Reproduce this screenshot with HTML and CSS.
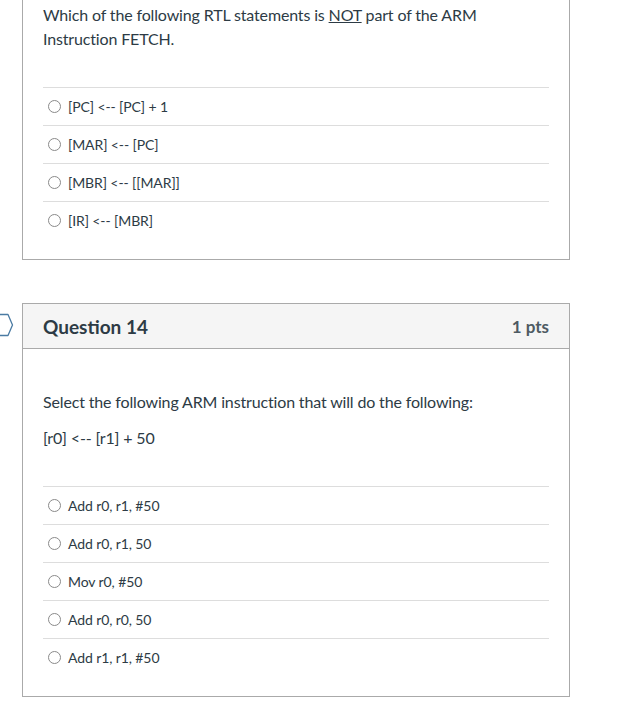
FILE: index.html
```html
<!DOCTYPE html>
<html>
<head>
<meta charset="utf-8">
<link rel="stylesheet" href="styles.css">
</head>
<body>
<div class="page">
  <div class="card card-cut">
    <div class="qbody qbody-top">
      <div class="qtext">
        <p>Which of the following RTL statements is <u>NOT</u> part of the ARM Instruction FETCH.</p>
      </div>
      <div class="answers">
        <label class="answer"><span class="radio"></span><span>[PC] &lt;-- [PC] + 1</span></label>
        <label class="answer"><span class="radio"></span><span>[MAR] &lt;-- [PC]</span></label>
        <label class="answer"><span class="radio"></span><span>[MBR] &lt;-- [[MAR]]</span></label>
        <label class="answer"><span class="radio"></span><span>[IR] &lt;-- [MBR]</span></label>
      </div>
    </div>
  </div>

  <div class="card card-full">
    <svg class="flag" width="16" height="24" viewBox="0 0 16 24"><path d="M0 1.5 H10 L14.5 12 L10 22.5 H0" fill="none" stroke="#4a7ba3" stroke-width="1.3" stroke-linejoin="round"/></svg>
    <div class="qheader">
      <span class="qtitle">Question 14</span>
      <span class="qpts">1 pts</span>
    </div>
    <div class="qbody qbody-main">
      <div class="qtext">
        <p>Select the following ARM instruction that will do the following:</p>
        <p>[r0] &lt;-- [r1] + 50</p>
      </div>
      <div class="answers">
        <label class="answer"><span class="radio"></span><span>Add r0, r1, #50</span></label>
        <label class="answer"><span class="radio"></span><span>Add r0, r1, 50</span></label>
        <label class="answer"><span class="radio"></span><span>Mov r0, #50</span></label>
        <label class="answer"><span class="radio"></span><span>Add r0, r0, 50</span></label>
        <label class="answer"><span class="radio"></span><span>Add r1, r1, #50</span></label>
      </div>
    </div>
  </div>
</div>
</body>
</html>
```

FILE: styles.css
```css
html, body {
  margin: 0;
  padding: 0;
  background: #ffffff;
}
body {
  font-family: Lato, "Open Sans", "Liberation Sans", sans-serif;
  color: #2d3b45;
}
.page {
  padding-left: 22px;
  width: 548px;
}
.card {
  position: relative;
  border: 1px solid #aaaaaa;
  background: #fff;
}
.card-cut {
  border-top: none;
}
.card-full {
  margin-top: 43px;
}
.qheader {
  height: 44px;
  background: #f5f5f5;
  border-bottom: 1px solid #aaaaaa;
  display: flex;
  align-items: center;
  justify-content: space-between;
  padding: 0 20px;
}
.qtitle {
  font-size: 19px;
  font-weight: 700;
  color: #2d3b45;
}
.qpts {
  font-size: 17px;
  font-weight: 700;
  color: #4d5a63;
}
.flag {
  position: absolute;
  left: -25px;
  top: 9px;
}
.qbody {
  padding: 0 20px 20px;
}
.qbody-top {
  padding-top: 3px;
}
.qbody-main {
  padding-top: 41px;
}
.qtext p {
  margin: 0 0 12px;
  font-size: 16px;
  line-height: 24px;
  letter-spacing: -0.15px;
}
.qtext p:last-child {
  margin-bottom: 0;
}
.answers {
  margin-top: 36px;
}
.answer {
  display: flex;
  align-items: center;
  height: 37px;
  padding-bottom: 1px;
  box-sizing: border-box;
  height: 38px;
  border-top: 1px solid #dddddd;
  font-size: 14px;
}
.answer span:last-child {
  letter-spacing: -0.1px;
}
.radio {
  width: 11px;
  height: 11px;
  border: 1px solid #8a8a8a;
  border-radius: 50%;
  margin-left: 5px;
  margin-right: 7px;
  flex: none;
}
```
